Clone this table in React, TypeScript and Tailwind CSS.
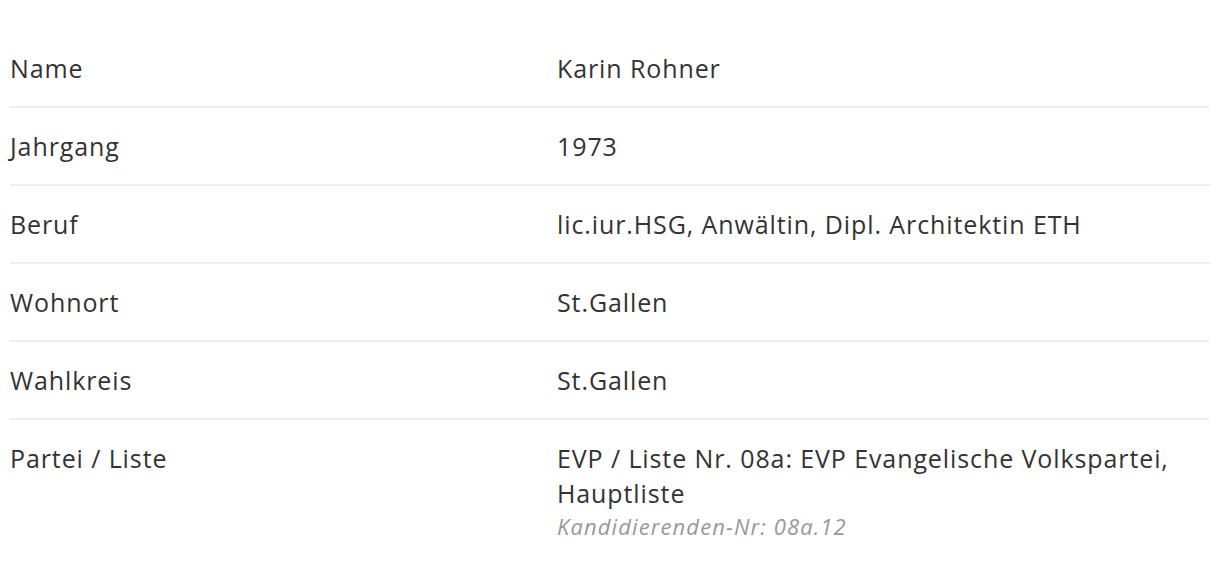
import React from "react";

const rows: { label: string; value: React.ReactNode }[] = [
  { label: "Name", value: "Karin Rohner" },
  { label: "Jahrgang", value: "1973" },
  { label: "Beruf", value: "lic.iur.HSG, Anwältin, Dipl. Architektin ETH" },
  { label: "Wohnort", value: "St.Gallen" },
  { label: "Wahlkreis", value: "St.Gallen" },
];

export default function App() {
  return (
    <div
      className="min-h-[572px] bg-white px-[10px] pt-[30px] text-[#333333]"
      style={{ fontFamily: "'Open Sans', 'Noto Sans', sans-serif" }}
    >
      {rows.map((r) => (
        <div
          key={r.label}
          className="flex border-b-2 border-[#eeeeee] pt-[21px] pb-[20px] text-[25px] leading-[35px] tracking-[0.9px]"
        >
          <div className="w-[547px] shrink-0">{r.label}</div>
          <div className="flex-1">{r.value}</div>
        </div>
      ))}
      <div className="flex pt-[21px] pb-[20px] text-[25px] leading-[35px] tracking-[0.9px]">
        <div className="w-[547px] shrink-0">Partei / Liste</div>
        <div className="flex-1 pr-[20px]">
          <div>EVP / Liste Nr. 08a: EVP Evangelische Volkspartei, Hauptliste</div>
          <div className="text-[22px] leading-[30px] italic tracking-[1.1px] text-[#999999]">
            Kandidierenden-Nr: 08a.12
          </div>
        </div>
      </div>
    </div>
  );
}
